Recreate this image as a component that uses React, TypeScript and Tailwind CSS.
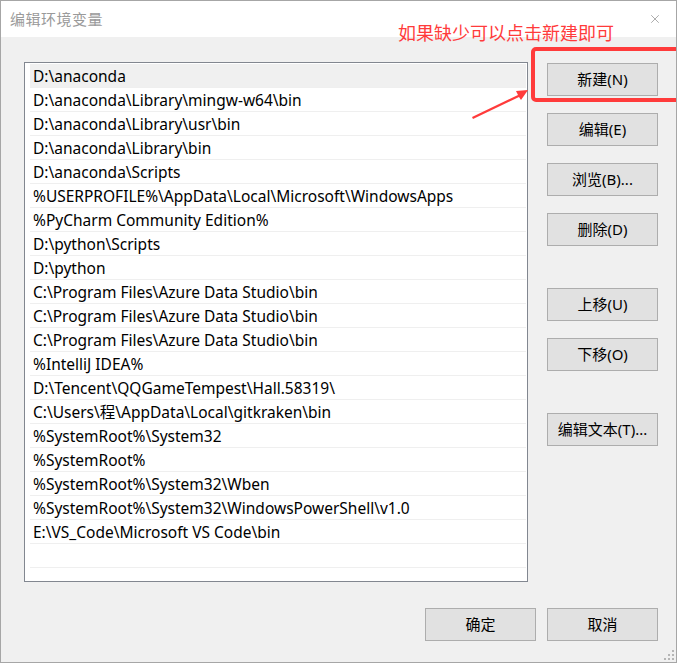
import { X } from 'lucide-react';

const paths = [
  'D:\\anaconda',
  'D:\\anaconda\\Library\\mingw-w64\\bin',
  'D:\\anaconda\\Library\\usr\\bin',
  'D:\\anaconda\\Library\\bin',
  'D:\\anaconda\\Scripts',
  '%USERPROFILE%\\AppData\\Local\\Microsoft\\WindowsApps',
  '%PyCharm Community Edition%',
  'D:\\python\\Scripts',
  'D:\\python',
  'C:\\Program Files\\Azure Data Studio\\bin',
  'C:\\Program Files\\Azure Data Studio\\bin',
  'C:\\Program Files\\Azure Data Studio\\bin',
  '%IntelliJ IDEA%',
  'D:\\Tencent\\QQGameTempest\\Hall.58319\\',
  'C:\\Users\\程\\AppData\\Local\\gitkraken\\bin',
  '%SystemRoot%\\System32',
  '%SystemRoot%',
  '%SystemRoot%\\System32\\Wben',
  '%SystemRoot%\\System32\\WindowsPowerShell\\v1.0',
  'E:\\VS_Code\\Microsoft VS Code\\bin',
  '',
  '',
];

const font = { fontFamily: '"Noto Sans", "Noto Sans CJK SC", sans-serif' };

function WinButton({ label, className = '' }: { label: string; className?: string }) {
  return (
    <button className={`w-[111px] h-[33px] border border-[#adadad] bg-[#e1e1e1] text-[15px] text-black flex items-center justify-center ${className}`}>
      {label}
    </button>
  );
}

export default function App() {
  return (
    <div
      className="relative w-[677px] h-[663px] border border-[#a6a6a6] bg-[#f0f0f0] flex flex-col overflow-hidden"
      style={font}
    >
      {/* title bar */}
      <div className="h-[36px] bg-white flex items-center justify-between pl-[9px] pr-[14px]">
        <span className="text-[15px] text-[#9a9a9a] tracking-[0.5px]">编辑环境变量</span>
        <X className="w-[14px] h-[14px] text-[#8a8a8a]" strokeWidth={1.2} />
      </div>

      <div className="flex pl-[23px] pt-[25px]">
        {/* path list */}
        <div className="w-[504px] h-[520px] border border-[#828790] bg-white pt-[1px] pl-[5px] pr-[1px] overflow-hidden">
          {paths.map((p, i) => (
            <div
              key={i}
              className={`h-[24px] border-b border-[#efefef] pl-[3px] pt-[2px] flex items-center text-[15.5px] text-black whitespace-nowrap ${i === 0 ? 'bg-[#f0f0f0]' : ''}`}
            >
              {p}
            </div>
          ))}
        </div>

        {/* side buttons */}
        <div className="ml-[19px] pt-[1px] flex flex-col">
          <WinButton label="新建(N)" />
          <WinButton label="编辑(E)" className="mt-[17px]" />
          <WinButton label="浏览(B)..." className="mt-[17px]" />
          <WinButton label="删除(D)" className="mt-[17px]" />
          <WinButton label="上移(U)" className="mt-[42px]" />
          <WinButton label="下移(O)" className="mt-[17px]" />
          <WinButton label="编辑文本(T)..." className="mt-[42px]" />
        </div>
      </div>

      <div className="flex justify-end gap-[11px] pr-[18px] pt-[26px]">
        <WinButton label="确定" />
        <WinButton label="取消" />
      </div>

      {/* resize grip */}
      <svg className="absolute right-[2px] bottom-[2px]" width="10" height="10" viewBox="0 0 10 10">
        <g fill="#b5b5b5">
          <rect x="8" y="0" width="2" height="2" />
          <rect x="4" y="4" width="2" height="2" />
          <rect x="8" y="4" width="2" height="2" />
          <rect x="0" y="8" width="2" height="2" />
          <rect x="4" y="8" width="2" height="2" />
          <rect x="8" y="8" width="2" height="2" />
        </g>
      </svg>

      {/* annotation overlay */}
      <span className="absolute left-[397px] top-[21px] text-[18px] leading-[22px] text-[#ff3b3b]">
        如果缺少可以点击新建即可
      </span>
      <div className="absolute left-[530px] top-[46px] w-[150px] h-[55px] border-[4px] border-[#ff3b3b] rounded-[5px]" />
      <svg className="absolute left-[465px] top-[84px]" width="70" height="38" viewBox="0 0 70 38">
        <polygon points="6,32 52,10 50,6 62,5 55,15 53,12 7,34" fill="#ff3b3b" />
      </svg>
    </div>
  );
}
